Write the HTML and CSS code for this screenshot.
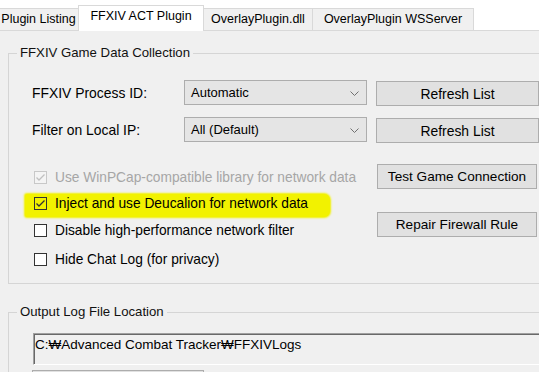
FILE: index.html
```html
<!DOCTYPE html>
<html lang="en">
<head>
  <meta charset="UTF-8">
  <title>FFXIV ACT Plugin</title>
  <link rel="stylesheet" href="styles.css">
</head>
<body>

  <!-- Tab strip -->
  <div class="tabs">
    <div class="tab first">Plugin Listing</div>
    <div class="tab active">FFXIV ACT Plugin</div>
    <div class="tab dll">OverlayPlugin.dll</div>
    <div class="tab ws">OverlayPlugin WSServer</div>
  </div>

  <div class="page">

    <!-- Game data settings -->
    <fieldset class="group game">
      <legend>FFXIV Game Data Collection</legend>

      <div class="settings">
        <span class="field-label">FFXIV Process ID:</span>
        <div class="combo">
          <span>Automatic</span>
          <svg class="chevron" width="9" height="5" viewBox="0 0 9 5"><polyline points="0.5,0.5 4.5,4.5 8.5,0.5" fill="none" stroke="#707070" stroke-width="1"/></svg>
        </div>
        <button class="btn">Refresh List</button>

        <span class="field-label">Filter on Local IP:</span>
        <div class="combo">
          <span>All (Default)</span>
          <svg class="chevron" width="9" height="5" viewBox="0 0 9 5"><polyline points="0.5,0.5 4.5,4.5 8.5,0.5" fill="none" stroke="#707070" stroke-width="1"/></svg>
        </div>
        <button class="btn">Refresh List</button>
      </div>

      <div class="options">
        <div class="checks">
          <label class="check disabled">
            <svg width="13" height="13" viewBox="0 0 13 13"><rect x="0.5" y="0.5" width="12" height="12" fill="#f4f4f4" stroke="#c8c8c8"/><polyline points="2.5,6.5 5,9 10.5,3.5" fill="none" stroke="#c0c0c0" stroke-width="1.3"/></svg>
            <span>Use WinPCap-compatible library for network data</span>
          </label>
          <label class="check marked">
            <svg width="13" height="13" viewBox="0 0 13 13"><rect x="0.5" y="0.5" width="12" height="12" fill="none" stroke="#333"/><polyline points="2.5,6.5 5,9 10.5,3.5" fill="none" stroke="#333" stroke-width="1.3"/></svg>
            <span>Inject and use Deucalion for network data</span>
          </label>
          <label class="check">
            <svg width="13" height="13" viewBox="0 0 13 13"><rect x="0.5" y="0.5" width="12" height="12" fill="#fff" stroke="#333"/></svg>
            <span>Disable high-performance network filter</span>
          </label>
          <label class="check last">
            <svg width="13" height="13" viewBox="0 0 13 13"><rect x="0.5" y="0.5" width="12" height="12" fill="#fff" stroke="#333"/></svg>
            <span>Hide Chat Log (for privacy)</span>
          </label>
        </div>

        <div class="actions">
          <button class="btn wide">Test Game Connection</button>
          <button class="btn wide">Repair Firewall Rule</button>
        </div>
      </div>
    </fieldset>

    <!-- Log output -->
    <fieldset class="group log">
      <legend>Output Log File Location</legend>
      <div class="path">C:₩Advanced Combat Tracker₩FFXIVLogs</div>
      <button class="btn browse"></button>
    </fieldset>

  </div>

</body>
</html>
```

FILE: styles.css
```css
body {
  margin: 0;
  width: 539px;
  height: 372px;
  overflow: hidden;
  background-color: #ffffff;
  font-family: "Liberation Sans", Arial, sans-serif;
  color: #000;
}

/* Tab strip */
.tabs {
  display: flex;
  align-items: flex-end;
  height: 31px;
  box-sizing: border-box;
  border-bottom: 1px solid #d9d9d9;
  background-color: #ffffff;
  width: 539px;
}

.tab {
  box-sizing: border-box;
  height: 22px;
  margin-left: -1px;
  border: 1px solid #d9d9d9;
  border-bottom: none;
  background-color: #f0f0f0;
  font-size: 12.5px;
  line-height: 21px;
  text-align: center;
  white-space: nowrap;
  color: #000;
}

.tab.first {
  margin-left: -6px;
  width: 85px;
  padding-left: 4px;
}

.tab.active {
  position: relative; /* sits above the strip border */
  z-index: 1;
  width: 126px;
  height: 26px;
  margin-bottom: -1px;
  background-color: #ffffff;
  line-height: 20px;
}

.tab.dll {
  width: 110px;
}

.tab.ws {
  width: 162px;
}

/* Page */
.page {
  background-color: #f0f0f0;
  padding: 14px 0 0 8px;
  height: 341px;
  box-sizing: border-box;
  overflow: hidden;
}

.group {
  margin: 0;
  padding: 0;
  width: 560px;
  min-width: 0;
  box-sizing: border-box;
  border: 1px solid #d5d5d5;
}

.group legend {
  margin-left: 8px;
  padding: 0 3px;
  font-size: 13.2px;
  line-height: 16px;
  color: #111;
}

.group.log {
  margin-top: 20px;
}

/* Dropdown rows */
.settings {
  display: grid;
  grid-template-columns: 143px 183px 163px;
  grid-auto-rows: 25px;
  column-gap: 9px;
  row-gap: 12px;
  padding: 19px 0 0 23px;
  align-items: center;
}

.field-label {
  font-size: 13.9px;
}

.combo {
  box-sizing: border-box;
  height: 25px;
  display: flex;
  align-items: center;
  justify-content: space-between;
  padding: 0 7px 0 6px;
  background-color: #e5e5e5;
  border: 1px solid #adadad;
  font-size: 13px;
}

.chevron {
  margin-top: 1px;
}

.btn {
  box-sizing: border-box;
  height: 25px;
  margin: 0;
  padding: 0;
  background-color: #e1e1e1;
  border: 1px solid #adadad;
  border-radius: 0;
  font-family: inherit;
  font-size: 13.9px;
  color: #000;
}

.settings .btn {
  width: 163px;
  margin-top: 2px;
}

/* Checkbox column and action buttons */
.options {
  display: flex;
  margin-top: 22px;
  padding: 0 0 11px 25px;
}

.checks {
  display: flex;
  flex-direction: column;
  width: 343px;
}

.check {
  display: flex;
  align-items: center;
  gap: 8px;
  height: 26px;
  font-size: 13.75px;
  white-space: nowrap;
}

.check svg {
  flex: none;
}

.check.disabled {
  color: #a6a6a6;
}

/* marker highlight painted over the second option */
.check.marked {
  box-sizing: border-box;
  width: 305px;
  height: 23px;
  margin: 4px 0 0 -9px;
  padding: 0 0 4px 9px;
  background-color: #f2f200;
  border-radius: 2px 6px 6px 2px;
  box-shadow: 0 0 2px 1px #f2f200;
}

.check.last {
  margin-top: 3px;
}

.actions {
  display: flex;
  flex-direction: column;
  gap: 23px;
}

.btn.wide {
  width: 160px;
  font-size: 13.6px;
}

/* Log location */
.path {
  box-sizing: border-box;
  margin: 13px 0 0 24px;
  height: 32px;
  padding: 3px 0 0 1px;
  border: 1px solid;
  border-color: #a0a0a0 #ffffff #ffffff #a0a0a0;
  box-shadow: inset 1px 1px 0 #696969;
  background-color: #f0f0f0;
  font-size: 13.5px;
  line-height: 16px;
  white-space: nowrap;
}

.btn.browse {
  display: block;
  width: 172px;
  margin: 5px 0 0 23px;
}
```
